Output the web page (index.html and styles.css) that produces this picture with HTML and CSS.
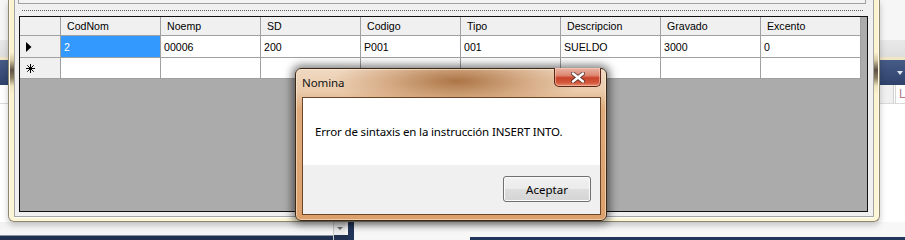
FILE: index.html
```html
<!DOCTYPE html>
<html>
<head>
<meta charset="utf-8">
<link rel="stylesheet" href="styles.css">
</head>
<body>
<div class="desk">
  <div class="band b-top"></div>
  <div class="band b-gray"></div>
  <div class="band b-cream"></div>
  <div class="band b-navy"><span class="navy-arrow"></span></div>
  <div class="band b-tabs"><span class="tab-cell"></span><span class="tab-l">L</span></div>
  <div class="band b-white"></div>
  <div class="band b-bottom">
    <div class="bb-left"></div>
    <div class="bb-combo"><span class="bb-arrow"></span></div>
    <div class="bb-gap"></div>
    <div class="bb-bar"></div>
    <div class="bb-mid"></div>
    <div class="bb-right"></div>
  </div>
</div>

<div class="mainwin">
  <div class="client">
    <div class="topbox"></div>
    <div class="dots"></div>
    <div class="grid">
      <div class="row hdr">
        <div class="cell rh"></div>
        <div class="cell hc">CodNom</div>
        <div class="cell hc">Noemp</div>
        <div class="cell hc">SD</div>
        <div class="cell hc">Codigo</div>
        <div class="cell hc">Tipo</div>
        <div class="cell hc">Descripcion</div>
        <div class="cell hc">Gravado</div>
        <div class="cell hc">Excento</div>
      </div>
      <div class="row r1">
        <div class="cell rh"><svg class="tri" width="6" height="10" viewBox="0 0 6 10"><path d="M0 0 L5.5 5 L0 10 Z" fill="#000"/></svg></div>
        <div class="cell dc sel">2</div>
        <div class="cell dc">00006</div>
        <div class="cell dc">200</div>
        <div class="cell dc">P001</div>
        <div class="cell dc">001</div>
        <div class="cell dc">SUELDO</div>
        <div class="cell dc">3000</div>
        <div class="cell dc">0</div>
      </div>
      <div class="row r2">
        <div class="cell rh"><svg class="star" width="9" height="9" viewBox="0 0 9 9"><path d="M4.5 0 V9 M0 4.5 H9 M1.3 1.3 L7.7 7.7 M7.7 1.3 L1.3 7.7" stroke="#000" stroke-width="1" fill="none"/></svg></div>
        <div class="cell dc"></div>
        <div class="cell dc"></div>
        <div class="cell dc"></div>
        <div class="cell dc"></div>
        <div class="cell dc"></div>
        <div class="cell dc"></div>
        <div class="cell dc"></div>
        <div class="cell dc"></div>
      </div>
    </div>
  </div>
</div>

<div class="dialog">
  <div class="titlebar">
    <span class="title">Nomina</span>
    <div class="close">
      <svg width="14" height="11" viewBox="0 0 14 11"><path d="M2 1.5 L12 9.5 M12 1.5 L2 9.5" stroke="#3d2a2a" stroke-width="4.2" stroke-linecap="round" fill="none" opacity="0.75"/><path d="M2 1.5 L12 9.5 M12 1.5 L2 9.5" stroke="#fff" stroke-width="2.4" stroke-linecap="round" fill="none"/></svg>
    </div>
  </div>
  <div class="dclient">
    <div class="msg">Error de sintaxis en la instrucción INSERT INTO.</div>
    <div class="btnbar"><div class="btn">Aceptar</div></div>
  </div>
</div>
</body>
</html>
```
FILE: styles.css
```css
html, body {
  margin: 0;
  padding: 0;
}
body {
  width: 905px;
  height: 240px;
  overflow: hidden;
  position: relative;
  background: #fff;
  font-family: "Liberation Sans", Arial, sans-serif;
}

/* background application behind the windows */
.desk {
  display: flex;
  flex-direction: column;
  height: 240px;
}
.band { flex: none; }
.b-top { height: 40px; background: #f6f6f6; }
.b-gray { height: 17px; background: linear-gradient(#e9e9e9, #dedede); }
.b-cream { height: 3px; background: #f1e6c4; }
.b-navy {
  height: 25px;
  background: linear-gradient(#465b86, #2e426c);
  display: flex;
  justify-content: flex-end;
  align-items: center;
}
.navy-arrow {
  width: 0;
  height: 0;
  border-left: 3px solid transparent;
  border-right: 3px solid transparent;
  border-top: 4px solid #dfe6f2;
  margin-right: 2px;
}
.b-tabs {
  height: 19px;
  background: #fff;
  border-bottom: 1px solid #dadada;
  box-sizing: border-box;
  display: flex;
  justify-content: flex-end;
}
.tab-cell {
  width: 13px;
  background: #f0f0f0;
  border-right: 1px solid #d0d0d0;
  margin-right: 1px;
}
.tab-l {
  width: 10px;
  border-left: 1px solid #d6d6d6;
  color: #b8788a;
  font-size: 12px;
  line-height: 19px;
  padding-left: 3px;
  box-sizing: border-box;
}
.b-white { flex: 1; background: #fff; }
.b-bottom {
  height: 18px;
  display: flex;
}
.bb-left {
  width: 333px;
  background: linear-gradient(#f2f2f2 0, #f7f7f7 13px, #1f3050 14px, #1f3050 100%);
}
.bb-combo {
  width: 12px;
  background: linear-gradient(#ececec 0, #ececec 13px, #1f3050 13px);
  border-left: 1px solid #c8c8c8;
  box-sizing: border-box;
  display: flex;
  justify-content: center;
  padding-top: 5px;
}
.bb-arrow {
  width: 0;
  height: 0;
  border-left: 3px solid transparent;
  border-right: 3px solid transparent;
  border-top: 3px solid #707070;
}
.bb-gap { width: 3px; background: linear-gradient(#f7f7f7 0, #f7f7f7 13px, #1f3050 13px); }
.bb-bar { width: 6px; background: #22355a; }
.bb-mid { width: 116px; background: #f7f7f7; }
.bb-right { flex: 1; background: linear-gradient(#f7f7f7 0, #f7f7f7 15px, #22355a 15px); }

/* main window (frame cut at top) */
.mainwin {
  position: absolute;
  left: 8px;
  top: 0;
  width: 872px;
  height: 222px;
  box-sizing: border-box;
  border: 1px solid #8e8670;
  border-top: none;
  border-radius: 0 0 6px 6px;
  padding: 0 5px 4px 5px;
  background: linear-gradient(180deg,
      #fcf4d0 0px, #fcf4d0 52px, #d9cba4 60px, #5b5142 70px,
      #8d7f62 78px, #efe4bd 86px, #fcf4d0 95px, #fdf6d6 100%);
  box-shadow: 0 3px 6px rgba(0, 0, 0, 0.22), inset 1px 0 0 #fffbe8, inset -1px 0 0 #fffbe8;
}
.client {
  height: 100%;
  box-sizing: border-box;
  border: 1px solid #a5a5a5;
  border-top: none;
  background: #f0f0f0;
  box-shadow: 0 1px 0 #ffffff;
}
.topbox {
  width: 848px;
  height: 4px;
  margin-left: 3px;
  box-sizing: border-box;
  border: 1px solid #a0a0a0;
  border-top: none;
  background: #f3f3f3;
}
.dots {
  width: 842px;
  height: 1px;
  margin: 6px 0 0 7px;
  background: repeating-linear-gradient(90deg, #5e5e5e 0 1px, transparent 1px 2px);
}
.grid {
  width: 849px;
  height: 196px;
  margin: 5px 0 0 4px;
  box-sizing: border-box;
  border: 1px solid #111;
  background: #ababab;
}
.row {
  display: flex;
}
.hdr { height: 19px; }
.r1 { height: 22px; }
.r2 { height: 21px; }
.cell {
  flex: none;
  width: 100px;
  box-sizing: border-box;
  border-right: 1px solid #a0a0a0;
  border-bottom: 1px solid #a0a0a0;
  display: flex;
  align-items: center;
  font-size: 10.6px;
  color: #000;
  background: #fff;
  white-space: nowrap;
  overflow: hidden;
}
.rh {
  width: 41px;
  background: #f0f0f0;
  padding-left: 6px;
}
.hc {
  background: #f0f0f0;
  padding-left: 6px;
}
.dc {
  padding-left: 3px;
}
.sel {
  background: #3399ff;
  color: #fff;
}
.tri { display: block; }
.star { display: block; }

/* message box */
.dialog {
  position: absolute;
  left: 295px;
  top: 68px;
  width: 312px;
  height: 153px;
  box-sizing: border-box;
  border: 1px solid #3b2817;
  border-radius: 6px;
  padding: 0 5px 5px 6px;
  display: flex;
  flex-direction: column;
  background:
    radial-gradient(ellipse 125px 30px at 52% 12px, rgba(160, 100, 50, 0.85) 0%, rgba(185, 125, 75, 0.45) 55%, rgba(200, 150, 100, 0) 100%),
    linear-gradient(180deg, #f0d9c2 0px, #eacbac 22px, #dfab7c 40px, #dca06b 100%);
  box-shadow: inset 0 0 0 1px rgba(255, 240, 220, 0.55), 0 0 9px 3px rgba(0, 0, 0, 0.5);
}
.titlebar {
  height: 28px;
  display: flex;
  align-items: flex-start;
  flex: none;
}
.title {
  margin-top: 6px;
  font-family: "Noto Sans", "Liberation Sans", sans-serif;
  font-size: 11.5px;
  letter-spacing: -0.1px;
  line-height: 16px;
  color: #111;
}
.close {
  margin-left: auto;
  margin-top: -1px;
  width: 47px;
  height: 19px;
  box-sizing: border-box;
  border: 1px solid #5a2516;
  border-top: none;
  border-radius: 0 0 5px 5px;
  background: linear-gradient(180deg, #eab2a2 0%, #de8a74 40%, #c9432a 55%, #d2563b 80%, #e58c6c 100%);
  box-shadow: inset 0 0 0 1px rgba(255, 210, 190, 0.55);
  display: flex;
  align-items: center;
  justify-content: center;
}
.close svg { display: block; }
.dclient {
  flex: 1;
  border: 1px solid #6a4528;
  display: flex;
  flex-direction: column;
  background: #f0f0f0;
}
.msg {
  height: 67px;
  flex: none;
  background: #fff;
  padding-left: 12px;
  display: flex;
  align-items: center;
  font-family: "Noto Sans", "Liberation Sans", sans-serif;
  font-size: 11.5px;
  letter-spacing: -0.15px;
  color: #000;
}
.btnbar {
  flex: 1;
  display: flex;
  justify-content: flex-end;
  align-items: flex-start;
  padding: 11px 9px 0 0;
}
.btn {
  width: 88px;
  height: 26px;
  box-sizing: border-box;
  border: 1px solid #707070;
  border-radius: 3px;
  background: linear-gradient(180deg, #f2f2f2 0%, #ebebeb 48%, #dddddd 52%, #d4d4d4 100%);
  box-shadow: inset 0 0 0 1px #fbfbfb;
  display: flex;
  align-items: center;
  justify-content: center;
  font-family: "Noto Sans", "Liberation Sans", sans-serif;
  font-size: 11.5px;
  color: #000;
}
```
